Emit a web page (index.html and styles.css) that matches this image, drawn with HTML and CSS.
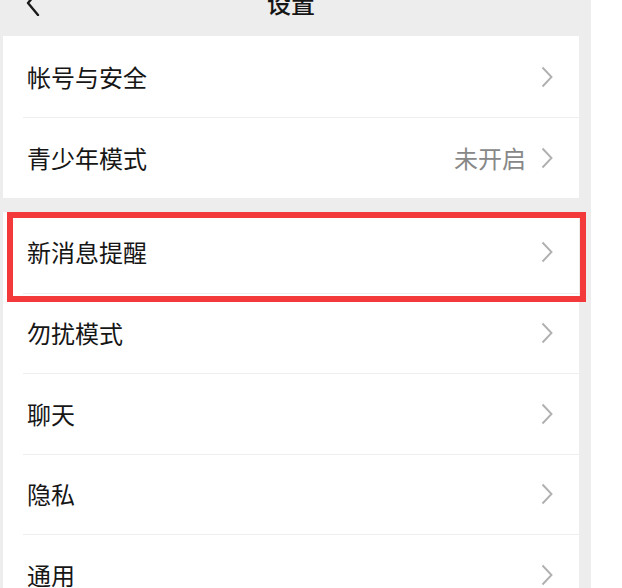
FILE: index.html
```html
<!DOCTYPE html>
<html lang="zh-CN">
<head>
<meta charset="utf-8">
<title>设置</title>
<link rel="stylesheet" href="styles.css">
</head>
<body>
<div class="page">
  <div class="screen">
    <header class="topbar">
      <div class="topbar-inner">
        <svg class="back" width="14" height="26" viewBox="0 0 14 26"><polyline points="12,1 2,13 12,25" fill="none" stroke="#1a1a1a" stroke-width="2.4" stroke-linecap="round" stroke-linejoin="round"/></svg>
        <span class="title">设置</span>
      </div>
    </header>

    <section class="card">
      <div class="row">
        <span class="label">帐号与安全</span>
        <span class="right"><svg class="chev" width="12" height="22" viewBox="0 0 12 22"><polyline points="1.5,1.5 10.5,11 1.5,20.5" fill="none" stroke="#b0b0b0" stroke-width="1.9"/></svg></span>
      </div>
      <div class="divider"></div>
      <div class="row">
        <span class="label">青少年模式</span>
        <span class="right"><span class="value">未开启</span><svg class="chev" width="12" height="22" viewBox="0 0 12 22"><polyline points="1.5,1.5 10.5,11 1.5,20.5" fill="none" stroke="#b0b0b0" stroke-width="1.9"/></svg></span>
      </div>
    </section>

    <section class="card card-second">
      <div class="row row-highlight">
        <span class="label">新消息提醒</span>
        <span class="right"><svg class="chev" width="12" height="22" viewBox="0 0 12 22"><polyline points="1.5,1.5 10.5,11 1.5,20.5" fill="none" stroke="#b0b0b0" stroke-width="1.9"/></svg></span>
      </div>
      <div class="divider"></div>
      <div class="row">
        <span class="label">勿扰模式</span>
        <span class="right"><svg class="chev" width="12" height="22" viewBox="0 0 12 22"><polyline points="1.5,1.5 10.5,11 1.5,20.5" fill="none" stroke="#b0b0b0" stroke-width="1.9"/></svg></span>
      </div>
      <div class="divider"></div>
      <div class="row">
        <span class="label">聊天</span>
        <span class="right"><svg class="chev" width="12" height="22" viewBox="0 0 12 22"><polyline points="1.5,1.5 10.5,11 1.5,20.5" fill="none" stroke="#b0b0b0" stroke-width="1.9"/></svg></span>
      </div>
      <div class="divider"></div>
      <div class="row">
        <span class="label">隐私</span>
        <span class="right"><svg class="chev" width="12" height="22" viewBox="0 0 12 22"><polyline points="1.5,1.5 10.5,11 1.5,20.5" fill="none" stroke="#b0b0b0" stroke-width="1.9"/></svg></span>
      </div>
      <div class="divider"></div>
      <div class="row">
        <span class="label">通用</span>
        <span class="right"><svg class="chev" width="12" height="22" viewBox="0 0 12 22"><polyline points="1.5,1.5 10.5,11 1.5,20.5" fill="none" stroke="#b0b0b0" stroke-width="1.9"/></svg></span>
      </div>
    </section>
  </div>
</div>
</body>
</html>
```

FILE: styles.css
```css
html, body {
  margin: 0;
  padding: 0;
  background: #ffffff;
}

body {
  font-family: "Noto Sans CJK SC", "Noto Sans", sans-serif;
  color: #161616;
  overflow: hidden;
}

.page {
  width: 622px;
  height: 588px;
  overflow: hidden;
  background: #ffffff;
}

.screen {
  width: 591px;
  min-height: 700px;
  background: #ededed;
  padding: 0 12px 0 3px;
  box-sizing: border-box;
}

.topbar {
  height: 36px;
  overflow: hidden;
}

.topbar-inner {
  display: flex;
  align-items: center;
  height: 26px;
  margin-top: -10px;
  padding-left: 23px;
}

.back {
  flex: none;
}

.title {
  flex: 1;
  text-align: center;
  font-size: 24px;
  font-weight: 500;
  line-height: 26px;
  margin-right: 37px;
  color: #161616;
}

.card {
  background: #ffffff;
  display: flex;
  flex-direction: column;
}

.card-second {
  margin-top: 14px;
}

.row {
  height: 79.5px;
  display: flex;
  align-items: center;
  justify-content: space-between;
  padding: 0 26px 0 24px;
}

.card > .row:first-child {
  height: 81px;
}

.label {
  font-size: 24px;
  line-height: 30px;
  color: #161616;
}

.right {
  display: flex;
  align-items: center;
  gap: 15px;
}

.value {
  font-size: 24px;
  line-height: 30px;
  color: #888888;
}

.chev {
  display: block;
}

.divider {
  height: 1px;
  margin-left: 20px;
  background: #eeeeee;
}

.row-highlight {
  position: relative;
}

.row-highlight::after {
  content: "";
  position: absolute;
  top: 0;
  left: 4px;
  right: -7px;
  bottom: -9px;
  border: 6px solid #f4393b;
  pointer-events: none;
}
```
